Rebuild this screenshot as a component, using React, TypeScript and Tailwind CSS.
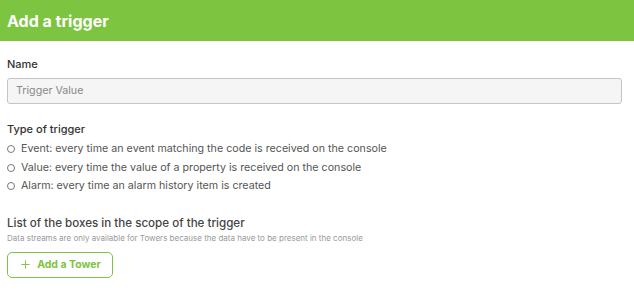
import { Plus } from "lucide-react";

const options = [
  "Event: every time an event matching the code is received on the console",
  "Value: every time the value of a property is received on the console",
  "Alarm: every time an alarm history item is created",
];

export default function App() {
  return (
    <div className="min-h-[303px] w-[634px] bg-white font-['Inter',sans-serif]">
      <div className="flex h-[41px] items-center bg-[#7dc440] px-[7px]">
        <h1 className="text-[16px] font-bold text-white">Add a trigger</h1>
      </div>
      <div className="px-[7px] pt-[15px]">
        <p className="text-[11px] font-medium text-[#333]">Name</p>
        <input
          className="mt-[5px] h-[26px] w-[615px] rounded-[3px] border border-[#c4c4c4] bg-[#f5f5f5] px-[8px] text-[10.7px] text-[#555] placeholder:text-[#888] outline-none"
          placeholder="Trigger Value"
        />
        <p className="mt-[17px] text-[11px] font-medium text-[#333]">Type of trigger</p>
        <div className="mt-[3px] flex flex-col">
          {options.map((o) => (
            <label key={o} className="flex h-[18.5px] items-center gap-[6px] text-[10.7px] text-[#555]">
              <span className="h-[8px] w-[8px] rounded-full border border-[#777]" />
              {o}
            </label>
          ))}
        </div>
        <p className="mt-[19px] text-[11.6px] font-medium text-[#444]">
          List of the boxes in the scope of the trigger
        </p>
        <p className="mt-[0px] text-[8px] text-[#999]">
          Data streams are only available for Towers because the data have to be present in the console
        </p>
        <button className="mt-[8px] flex h-[26px] w-[106px] items-center justify-center gap-[5px] rounded-[5px] border border-[#7dc440] text-[10.5px] font-bold text-[#7dc440]">
          <Plus size={13} strokeWidth={1.8} />
          Add a Tower
        </button>
      </div>
    </div>
  );
}
